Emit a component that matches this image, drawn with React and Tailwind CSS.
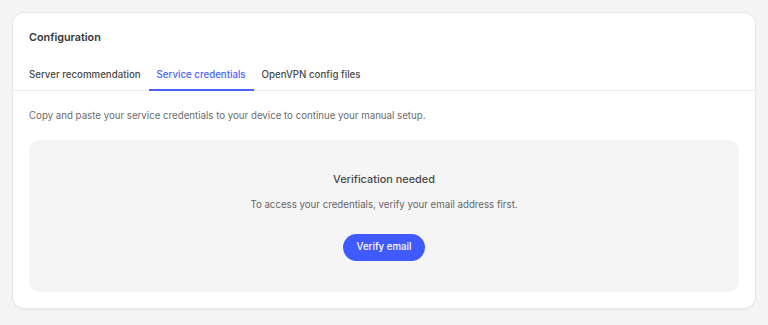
import React, { useState } from 'react';

const tabs = ['Server recommendation', 'Service credentials', 'OpenVPN config files'];

const App = () => {
  const [active, setActive] = useState(1);

  return (
    <div className="min-h-screen bg-[#f4f4f4] px-3 pt-3 pb-4 font-['Inter',sans-serif]">
      <div className="rounded-xl border border-[#e6e6e6] bg-white shadow-[0_1px_2px_rgba(0,0,0,0.04)]">
        <div className="px-[16px] pt-[18px]">
          <h2 className="text-[10.8px] font-semibold leading-[14px] text-[#383838]">Configuration</h2>
        </div>

        <div className="mt-[13px] flex border-b border-[#ececec] px-[8px]">
          {tabs.map((tab, i) => (
            <button
              key={tab}
              type="button"
              onClick={() => setActive(i)}
              className={
                i === active
                  ? '-mb-px border-b-2 border-[#4a63ff] px-2 pt-[10px] pb-[7px] text-[9.7px] font-medium leading-[14px] text-[#4a63ff]'
                  : '-mb-px border-b-2 border-transparent px-2 pt-[10px] pb-[7px] text-[9.7px] font-medium leading-[14px] text-[#4a4a4a]'
              }
            >
              {tab}
            </button>
          ))}
        </div>

        <div className="px-[16px] pt-[18px] pb-4">
          <p className="text-[9.7px] leading-[14px] text-[#6b6b6b]">
            Copy and paste your service credentials to your device to continue your manual setup.
          </p>

          <div className="mt-[17px] flex flex-col items-center rounded-[10px] bg-[#f5f5f5] pt-[32px] pb-[31px]">
            <h3 className="text-[10.9px] font-medium leading-[14px] text-[#4a4a4a]">Verification needed</h3>
            <p className="mt-[12px] text-[9.7px] leading-[14px] text-[#666]">
              To access your credentials, verify your email address first.
            </p>
            <button
              type="button"
              className="mt-[22px] h-[27px] rounded-full bg-[#3f5bff] px-[14px] text-[9.7px] font-medium text-white"
            >
              Verify email
            </button>
          </div>
        </div>
      </div>
    </div>
  );
};

export default App;
